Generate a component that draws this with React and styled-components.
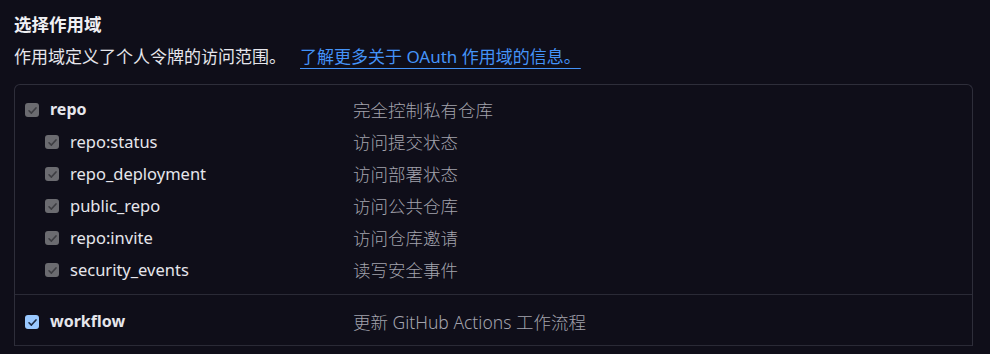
import React from 'react';
import styled, { createGlobalStyle } from 'styled-components';

const Global = createGlobalStyle`
    body {
        margin: 0;
        background: #0f0e19;
        font-family: "Noto Sans", "Noto Sans CJK SC", sans-serif;
        color: #e6e6ec;
    }
`;

const S = {
    Page: styled.div`
        padding: 10px 17px 0 14px;
        width: 990px;
        height: 354px;
        box-sizing: border-box;
        overflow: hidden;
    `,
    Title: styled.h3`
        margin: 0;
        font-size: 17.5px;
        font-weight: 700;
        line-height: 28px;
        color: #f0f0f4;
    `,
    Desc: styled.p`
        margin: 6px 0 14px;
        font-size: 17px;
        line-height: 26px;
        color: #e6e6ec;
        & a {
            margin-left: 14px;
            color: #4493f8;
            text-decoration: underline;
            text-underline-offset: 5px;
        }
    `,
    Box: styled.div`
        border: 1px solid #2e2e3a;
        border-bottom: none;
        border-radius: 6px 6px 0 0;
    `,
    Group: styled.div`
        padding: ${p => p.$top}px 0 ${p => p.$bottom}px;
        border-bottom: 1px solid #2a2a36;
    `,
    Row: styled.div`
        display: grid;
        grid-template-columns: 328px 1fr;
        align-items: center;
        height: 32px;
        padding-left: 10px;
    `,
    Label: styled.label`
        display: flex;
        align-items: center;
        gap: 11px;
        padding-left: ${p => (p.$sub ? 20 : 0)}px;
        font-size: ${p => (p.$bold ? 16 : 16.5)}px;
        font-weight: ${p => (p.$bold ? 700 : 400)};
        color: #e6e6ec;
        & > span {
            position: relative;
            top: 1px;
        }
    `,
    Check: styled.span`
        display: inline-flex;
        align-items: center;
        justify-content: center;
        width: 14px;
        height: 14px;
        border-radius: 3px;
        background: ${p => (p.$on ? '#99c8ff' : '#6b6b70')};
        & svg {
            width: 11px;
            height: 11px;
        }
    `,
    Note: styled.span`
        font-size: 17.5px;
        font-weight: 300;
        color: #a3a3ad;
        white-space: nowrap;
    `
};

const CheckBox = ({ on }) => (
    <S.Check $on={on}>
        <svg viewBox="0 0 12 12" fill="none">
            <path
                d="M2.2 6.3 L4.8 8.8 L9.8 3.2"
                stroke={on ? '#1c2b44' : '#3d3d42'}
                strokeWidth="1.8"
                strokeLinecap="round"
                strokeLinejoin="round"
            />
        </svg>
    </S.Check>
);

const subs = [
    ['repo:status', '访问提交状态'],
    ['repo_deployment', '访问部署状态'],
    ['public_repo', '访问公共仓库'],
    ['repo:invite', '访问仓库邀请'],
    ['security_events', '读写安全事件']
];

export default function App() {
    return (
        <>
            <Global />
            <S.Page>
                <S.Title>选择作用域</S.Title>
                <S.Desc>
                    作用域定义了个人令牌的访问范围。
                    <a href="#">了解更多关于 OAuth 作用域的信息。</a>
                </S.Desc>
                <S.Box>
                    <S.Group $top={8} $bottom={9}>
                        <S.Row>
                            <S.Label $bold>
                                <CheckBox />
                                repo
                            </S.Label>
                            <S.Note>完全控制私有仓库</S.Note>
                        </S.Row>
                        {subs.map(([name, note]) => (
                            <S.Row key={name}>
                                <S.Label $sub>
                                    <CheckBox />
                                    {name}
                                </S.Label>
                                <S.Note>{note}</S.Note>
                            </S.Row>
                        ))}
                    </S.Group>
                    <S.Group $top={10} $bottom={8}>
                        <S.Row>
                            <S.Label $bold>
                                <CheckBox on />
                                workflow
                            </S.Label>
                            <S.Note>更新 GitHub Actions 工作流程</S.Note>
                        </S.Row>
                    </S.Group>
                </S.Box>
            </S.Page>
        </>
    );
}
